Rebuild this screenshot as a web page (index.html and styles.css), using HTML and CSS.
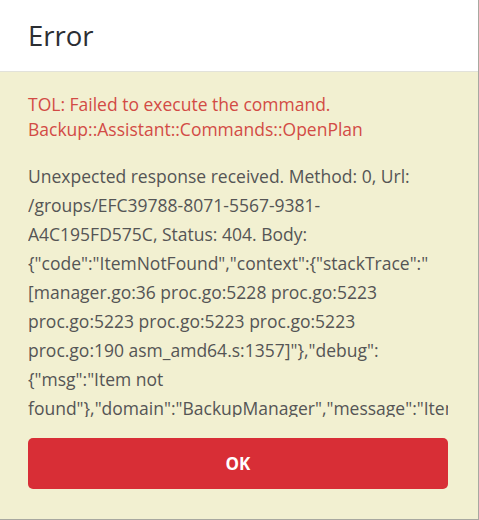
FILE: index.html
```html
<!DOCTYPE html>
<html>
<head>
<meta charset="utf-8">
<link rel="stylesheet" href="styles.css">
</head>
<body>
<div class="modal">
  <div class="modal-header">
    <h1 class="modal-title">Error</h1>
  </div>
  <div class="modal-body">
    <div class="error-summary">TOL: Failed to execute the command.<br>Backup::Assistant::Commands::OpenPlan</div>
    <div class="error-details">Unexpected response received. Method: 0, Url: /groups/EFC39788-8071-5567-9381-A4C195FD575C, Status: 404. Body: {"code":"ItemNotFound","context":{"stackTrace":"[manager.go:36 proc.go:5228 proc.go:5223 proc.go:5223 proc.go:5223 proc.go:5223 proc.go:190 asm_amd64.s:1357]"},"debug":{"msg":"Item not found"},"domain":"BackupManager","message":"Item not found"}</div>
    <button class="btn-ok">OK</button>
  </div>
</div>
</body>
</html>
```
FILE: styles.css
```css
html, body {
  margin: 0;
  padding: 0;
  background: #ffffff;
}
body {
  font-family: "Open Sans", "Liberation Sans", sans-serif;
}
.modal {
  width: 478px;
  height: 519px;
  border-right: 1px solid #a8a8a0;
  border-bottom: 1px solid #a8a8a0;
  background: #f2f0d1;
  display: flex;
  flex-direction: column;
}
.modal-header {
  height: 71px;
  background: #ffffff;
  border-bottom: 1px solid #e2e2da;
  display: flex;
  align-items: center;
  padding-left: 28px;
}
.modal-title {
  margin: 0;
  font-size: 27.5px;
  font-weight: 400;
  color: #2b2e33;
  line-height: 1;
}
.modal-body {
  flex: 1;
  padding: 20px 30px 29px 28px;
  display: flex;
  flex-direction: column;
}
.error-summary {
  color: #d24b45;
  font-size: 17.5px;
  line-height: 25px;
}
.error-details {
  margin-top: 20px;
  height: 255px;
  overflow: hidden;
  color: #555555;
  font-size: 17.5px;
  line-height: 29px;
}
.btn-ok {
  margin-top: 21px;
  height: 51px;
  width: 100%;
  border: none;
  border-radius: 5px;
  background: #d82e36;
  color: #ffffff;
  font-family: "Open Sans", "Liberation Sans", sans-serif;
  font-weight: 700;
  font-size: 17px;
  cursor: pointer;
}
```
